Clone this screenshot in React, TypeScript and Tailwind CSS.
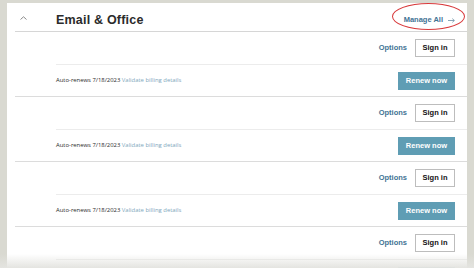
import React from "react";

const sections = [0, 1, 2, 3];

function Chevron() {
  return (
    <svg width="7" height="4" viewBox="0 0 7 4" className="mb-[4px]">
      <path d="M0.5 3.5 L3.5 0.8 L6.5 3.5" fill="none" stroke="#8a8a8a" strokeWidth="1" />
    </svg>
  );
}

function Section() {
  return (
    <div className="border-b border-[#dcdcdc]">
      <div className="ml-[41px]">
        <div className="flex h-[33px] items-center justify-end gap-[8px] border-b border-[#ececec] pr-[12px]">
          <span className="text-[7.5px] font-bold text-[#3f7394]">Options</span>
          <button className="flex h-[18px] w-[40px] items-center justify-center border border-[#bdbdbd] bg-white text-[7.5px] font-bold text-[#111]">
            Sign in
          </button>
        </div>
        <div className="flex h-[31px] items-center justify-between pr-[12px]">
          <p className="font-['Open_Sans',sans-serif] text-[5.9px] text-[#2a2a2a]">
            Auto-renews 7/18/2023{" "}
            <span className="text-[#7ea6bb]">Validate billing details</span>
          </p>
          <button className="flex h-[18px] w-[57px] items-center justify-center bg-[#5f9db4] text-[7.5px] font-bold text-white">
            Renew now
          </button>
        </div>
      </div>
    </div>
  );
}

export default function App() {
  return (
    <div className="relative flex h-[268px] w-[474px] overflow-hidden bg-[#d9d9d1] pl-[7px] pr-[7px] pt-[3px] font-['Liberation_Sans',Arial,sans-serif]">
      <div className="flex-1 bg-white">
        <div className="ml-[8px]">
          <div className="flex h-[29px] items-center border-b border-[#d6d6d6] pr-[12px] pt-[6px]">
            <div className="ml-[5px] w-[36px]">
              <Chevron />
            </div>
            <h1 className="flex-1 text-[12.5px] font-bold tracking-[0.2px] text-[#2b2b2b]">
              Email &amp; Office
            </h1>
            <span className="relative flex items-center gap-[5px] text-[7.5px] font-bold text-[#3f7394]">
              Manage All
              <svg width="7" height="5" viewBox="0 0 7 5">
                <path d="M0 2.5 H6.3 M4.3 0.6 L6.3 2.5 L4.3 4.4" fill="none" stroke="#6b8fa6" strokeWidth="0.8" />
              </svg>
              <span className="absolute left-[-12px] top-[-11px] h-[27px] w-[73px] rounded-[50%] border-[1.3px] border-[#d8393b]" />
            </span>
          </div>
          {sections.map((s) => (
            <Section key={s} />
          ))}
        </div>
      </div>
      <div className="pointer-events-none absolute bottom-0 left-0 h-[14px] w-full bg-gradient-to-b from-transparent to-[#e4e4e0]" />
    </div>
  );
}
